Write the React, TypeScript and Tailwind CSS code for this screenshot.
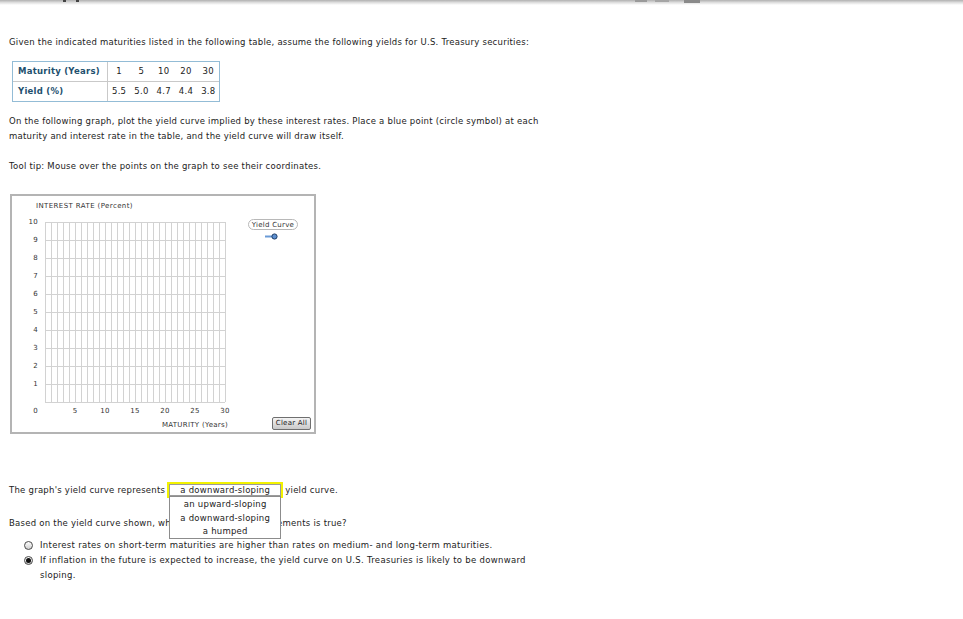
import React from "react";

const yearsRow = [1, 5, 10, 20, 30];
const yieldRow = ["5.5", "5.0", "4.7", "4.4", "3.8"];

function YieldTable() {
  return (
    <table className="ml-[3px] mt-[11px] border border-[#93bcd6] border-separate border-spacing-0 bg-white">
      <tbody>
        <tr className="h-[20px]">
          <td className="w-[95px] border-r border-b border-[#c9c9c9] pl-[5px] font-bold text-[#22506e]">Maturity (Years)</td>
          {yearsRow.map((y) => (
            <td key={y} className="border-b border-[#c9c9c9] px-[4px] text-center">
              {y}
            </td>
          ))}
        </tr>
        <tr className="h-[19px]">
          <td className="border-r border-[#c9c9c9] pl-[5px] font-bold text-[#22506e]">Yield (%)</td>
          {yieldRow.map((v) => (
            <td key={v} className="px-[4px] text-center">
              {v}
            </td>
          ))}
        </tr>
      </tbody>
    </table>
  );
}

function YieldChart() {
  const left = 33;
  const top = 26;
  const colW = 6;
  const rowH = 18;
  const verticals = Array.from({ length: 31 }, (_, i) => left + i * colW);
  const horizontals = Array.from({ length: 11 }, (_, j) => top + j * rowH);
  const labelFont = "'DejaVu Sans', sans-serif";

  return (
    <div className="relative ml-[1px] mt-[20px] h-[240px] w-[306px] border-2 border-[#b4b4b4] bg-white">
      <svg width="302" height="236" viewBox="0 0 302 236" className="block">
        {verticals.map((x) => (
          <line key={`v${x}`} x1={x + 0.5} y1={top} x2={x + 0.5} y2={top + 180} stroke="#d2d2d2" strokeWidth="1" />
        ))}
        {horizontals.map((y) => (
          <line key={`h${y}`} x1={left} y1={y + 0.5} x2={left + 180} y2={y + 0.5} stroke="#d2d2d2" strokeWidth="1" />
        ))}
        <g fontFamily={labelFont} fontSize="7" fill="#333">
          <text x="24" y="12" letterSpacing="0.4">INTEREST RATE (Percent)</text>
          {Array.from({ length: 10 }, (_, k) => 10 - k).map((n, k) => (
            <text key={n} x="26" y={top + k * rowH + 2} textAnchor="end">
              {n}
            </text>
          ))}
          <text x="26" y="216.5" textAnchor="end">0</text>
          {[5, 10, 15, 20, 25, 30].map((n) => (
            <text key={n} x={left + n * colW} y="216.5" textAnchor="middle">
              {n}
            </text>
          ))}
          <text x="216" y="230.5" textAnchor="end" letterSpacing="0.3">MATURITY (Years)</text>
        </g>
        <rect x="236.5" y="23.5" width="49" height="10" rx="5" fill="#fff" stroke="#b8b8b8" />
        <text x="261" y="31" textAnchor="middle" fontFamily={labelFont} fontSize="7" fill="#333">
          Yield Curve
        </text>
        <line x1="253" y1="40.5" x2="261" y2="40.5" stroke="#6a9bd6" strokeWidth="2" />
        <circle cx="262.5" cy="40.5" r="2.6" fill="#5d8fd0" stroke="#1d3d66" strokeWidth="1" />
      </svg>
      <button
        type="button"
        className="absolute right-[3px] bottom-[2px] h-[13px] w-[39px] rounded-[2px] border border-[#6f6f6f] bg-gradient-to-b from-[#f4f4f4] to-[#c9c9c9] p-0 text-[7px] leading-[11px] text-[#222] font-['DejaVu_Sans',sans-serif]"
      >
        Clear All
      </button>
    </div>
  );
}

function Radio({ checked }: { checked?: boolean }) {
  return (
    <span className="mt-[3px] flex h-[9px] w-[9px] shrink-0 items-center justify-center rounded-full border border-[#4a4a4a] bg-gradient-to-b from-white to-[#cfcfcf]">
      {checked ? <span className="h-[5px] w-[5px] rounded-full bg-[#111]" /> : null}
    </span>
  );
}

export default function App() {
  return (
    <div className="relative h-[619px] w-[963px] overflow-hidden bg-white text-[8.5px] tracking-[0.25px] text-[#222] font-['DejaVu_Sans',sans-serif]">
      <div className="flex h-[5px] bg-gradient-to-b from-[#b0b0b0] via-[#dedede] to-white">
        <span className="ml-[63px] h-[2px] w-[3px] bg-[#444]" />
        <span className="ml-[10px] h-[2px] w-[3px] bg-[#444]" />
        <span className="ml-[556px] h-[2px] w-[12px] bg-[#9a9a9a]" />
        <span className="ml-[8px] h-[2px] w-[14px] bg-[#a5a5a5]" />
        <span className="ml-[15px] h-[3px] w-[16px] bg-[#8a8a8a]" />
      </div>

      <div className="pl-[9px] pt-[30px]">
        <p className="leading-[15px]">
          Given the indicated maturities listed in the following table, assume the following yields for U.S. Treasury securities:
        </p>

        <YieldTable />

        <p className="mt-[12px] w-[545px] leading-[15px]">
          On the following graph, plot the yield curve implied by these interest rates. Place a blue point (circle symbol) at each maturity and interest rate in the table, and the yield curve will draw itself.
        </p>

        <p className="mt-[15px] leading-[15px]">Tool tip: Mouse over the points on the graph to see their coordinates.</p>

        <YieldChart />

        <div className="mt-[48px] flex items-center leading-[15px]">
          <span>The graph&apos;s yield curve represents</span>
          <span className="relative ml-[2px] inline-block border-2 border-[#f2f200]">
            <span className="block h-[12px] w-[112px] border border-[#9b9b9b] bg-white text-center leading-[10px]">
              a downward-sloping
            </span>
            <ul className="absolute left-0 top-[12px] z-10 w-[112px] border border-[#8c8c8c] bg-white text-center">
              <li className="h-[14px] leading-[14px]">an upward-sloping</li>
              <li className="h-[14px] leading-[14px]">a downward-sloping</li>
              <li className="h-[13px] leading-[13px]">a humped</li>
            </ul>
          </span>
          <span className="ml-[2px]">yield curve.</span>
        </div>

        <p className="mt-[18px] leading-[15px]">
          Based on the yield curve shown, which of the following statements is true?
        </p>

        <div className="mt-[7px] ml-[15px] flex flex-col tracking-[0.3px]">
          <label className="flex gap-[7px] leading-[15px]">
            <Radio />
            <span>Interest rates on short-term maturities are higher than rates on medium- and long-term maturities.</span>
          </label>
          <label className="flex gap-[7px] leading-[15px]">
            <Radio checked />
            <span className="w-[495px]">
              If inflation in the future is expected to increase, the yield curve on U.S. Treasuries is likely to be downward sloping.
            </span>
          </label>
        </div>
      </div>
    </div>
  );
}
